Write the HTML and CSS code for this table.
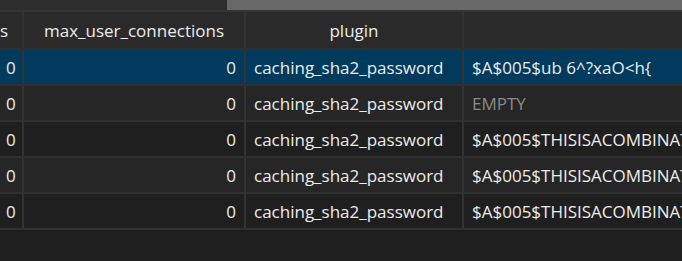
FILE: index.html
```html
<!DOCTYPE html>
<html lang="en">
<head>
    <meta charset="UTF-8">
    <title>mysql.user</title>
    <link rel="stylesheet" href="styles.css">
</head>
<body>
    <div class="top-bar">
        <div class="tab-area"></div>
        <div class="scroll-area"></div>
    </div>

    <div class="grid">
        <div class="row header">
            <div class="cell c1">s</div>
            <div class="cell c2 center">max_user_connections</div>
            <div class="cell c3 center">plugin</div>
            <div class="cell c4"></div>
        </div>
        <div class="row selected">
            <div class="cell c1">0</div>
            <div class="cell c2 num">0</div>
            <div class="cell c3">caching_sha2_password</div>
            <div class="cell c4">$A$005$ub 6^?xaO&lt;h{</div>
        </div>
        <div class="row even">
            <div class="cell c1">0</div>
            <div class="cell c2 num">0</div>
            <div class="cell c3">caching_sha2_password</div>
            <div class="cell c4 empty">EMPTY</div>
        </div>
        <div class="row odd">
            <div class="cell c1">0</div>
            <div class="cell c2 num">0</div>
            <div class="cell c3">caching_sha2_password</div>
            <div class="cell c4">$A$005$THISISACOMBINATIONOFINVALIDSALTANDPASSWORD</div>
        </div>
        <div class="row even">
            <div class="cell c1">0</div>
            <div class="cell c2 num">0</div>
            <div class="cell c3">caching_sha2_password</div>
            <div class="cell c4">$A$005$THISISACOMBINATIONOFINVALIDSALTANDPASSWORD</div>
        </div>
        <div class="row odd">
            <div class="cell c1">0</div>
            <div class="cell c2 num">0</div>
            <div class="cell c3">caching_sha2_password</div>
            <div class="cell c4">$A$005$THISISACOMBINATIONOFINVALIDSALTANDPASSWORD</div>
        </div>
    </div>
</body>
</html>
```

FILE: styles.css
```css
* {
    margin: 0;
    padding: 0;
    box-sizing: border-box;
}

body {
    font-family: 'Open Sans', 'Noto Sans', sans-serif;
    font-size: 17px;
    background: #1e1e1e;
    color: #ececec;
    width: 682px;
    height: 261px;
    overflow: hidden;
}

.top-bar {
    display: flex;
    height: 12px;
    border-bottom: 2px solid #353535;
}

.tab-area {
    width: 227px;
    background: #2d2d2d;
}

.scroll-area {
    flex: 1;
    background: #686868;
}

.grid {
    width: 682px;
}

.row {
    display: flex;
    height: 36px;
    border-bottom: 2px solid #303030;
}

.row.header {
    height: 38px;
    background: #2a2a2a;
}

.row.selected {
    background: #003a5c;
}

.row.even {
    background: #262626;
}

.row.odd {
    background: #1f1f1f;
}

.cell {
    display: flex;
    align-items: center;
    padding: 1px 8px 0;
    white-space: nowrap;
    overflow: hidden;
    border-right: 2px solid #333333;
}

.c1 {
    width: 24px;
    padding-left: 6px;
    padding-right: 0;
}

.header .c1 {
    padding-left: 0;
}

.c2 {
    width: 222px;
}

.c3 {
    width: 218px;
}

.c4 {
    flex: 1;
    border-right: none;
}

.center {
    justify-content: center;
}

.num {
    justify-content: flex-end;
}

.empty {
    color: #8a8a8a;
}
```
